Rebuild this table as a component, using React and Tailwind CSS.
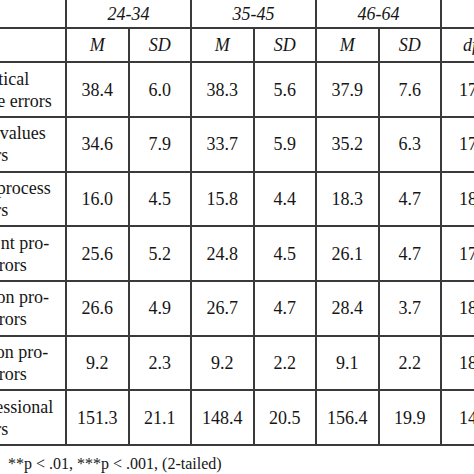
import React from "react";

const rows = [
  { l1: ["tical", 29.3], l2: ["e errors", 51.7], v: ["38.4", "6.0", "38.3", "5.6", "37.9", "7.6"], df: "17.5" },
  { l1: ["values", 45.7], l2: ["rs", 8.3], v: ["34.6", "7.9", "33.7", "5.9", "35.2", "6.3"], df: "17.2" },
  { l1: ["process", 50.7], l2: ["rs", 8.3], v: ["16.0", "4.5", "15.8", "4.4", "18.3", "4.7"], df: "18.4" },
  { l1: ["nt pro-", 49.3], l2: ["rors", 26.7], v: ["25.6", "5.2", "24.8", "4.5", "26.1", "4.7"], df: "17.1" },
  { l1: ["on pro-", 49], l2: ["rors", 26.7], v: ["26.6", "4.9", "26.7", "4.7", "28.4", "3.7"], df: "18.6" },
  { l1: ["on pro-", 48.3], l2: ["rors", 26.7], v: ["9.2", "2.3", "9.2", "2.2", "9.1", "2.2"], df: "18.0" },
  { l1: ["essional", 53.3], l2: ["rs", 8.3], v: ["151.3", "21.1", "148.4", "20.5", "156.4", "19.9"], df: "14.3" },
];

function Frag({ text, end }) {
  return (
    <div className="flex justify-end" style={{ width: end }}>
      <span className="whitespace-nowrap shrink-0">{text}</span>
    </div>
  );
}

export default function App() {
  return (
    <div
      className="w-[474px] h-[474px] overflow-hidden bg-white text-[#161616]"
      style={{ fontFamily: '"Liberation Serif", "Times New Roman", serif' }}
    >
      <div className="w-[522px] grid grid-cols-[65px_60.5px_60.5px_60.5px_60.5px_60.5px_60.5px_80px] grid-rows-[27.3px_32px_repeat(7,52.7px)] gap-[2px] bg-[#3a3a3a] pb-[2px] text-[18px] leading-[22px]">
        {/* header row 1 */}
        <div className="bg-white" />
        <div className="bg-white col-span-2 flex items-center justify-center italic">24-34</div>
        <div className="bg-white col-span-2 flex items-center justify-center italic">35-45</div>
        <div className="bg-white col-span-2 flex items-center justify-center italic">46-64</div>
        <div className="bg-white" />
        {/* header row 2 */}
        <div className="bg-white" />
        <div className="bg-white flex items-center justify-center italic">M</div>
        <div className="bg-white flex items-center justify-center italic">SD</div>
        <div className="bg-white flex items-center justify-center italic">M</div>
        <div className="bg-white flex items-center justify-center italic">SD</div>
        <div className="bg-white flex items-center justify-center italic">M</div>
        <div className="bg-white flex items-center justify-center italic">SD</div>
        <div className="bg-white flex items-center pl-[21px] italic">df</div>
        {rows.map((r, i) => (
          <React.Fragment key={i}>
            <div className="bg-white flex flex-col justify-center overflow-hidden">
              <Frag text={r.l1[0]} end={r.l1[1]} />
              <Frag text={r.l2[0]} end={r.l2[1]} />
            </div>
            {r.v.map((v, j) => (
              <div key={j} className="bg-white flex items-center justify-center">
                {v}
              </div>
            ))}
            <div className="bg-white flex items-center pl-[17px] whitespace-nowrap">{r.df}</div>
          </React.Fragment>
        ))}
      </div>
      <div className="mt-[8px] pl-[8px] text-[16px] leading-[20px] whitespace-nowrap">
        **p &lt; .01, ***p &lt; .001, (2-tailed)
      </div>
    </div>
  );
}
